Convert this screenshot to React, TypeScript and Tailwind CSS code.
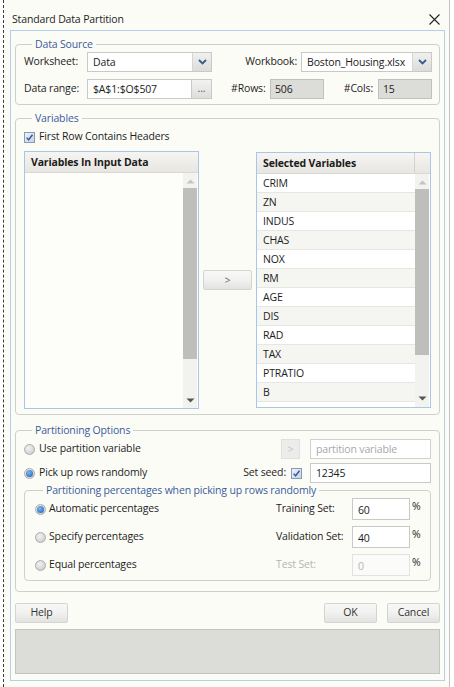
import React from 'react';

const VARS = ['CRIM', 'ZN', 'INDUS', 'CHAS', 'NOX', 'RM', 'AGE', 'DIS', 'RAD', 'TAX', 'PTRATIO', 'B', 'LSTAT'];

function Group({ title, className = '', children }: { title: string; className?: string; children: React.ReactNode }) {
  return (
    <fieldset className={`border border-[#cfcfcb] rounded-[4px] ${className}`}>
      <legend className="ml-[8px] px-[3px] text-[#3b5b9b] leading-[14px]">{title}</legend>
      {children}
    </fieldset>
  );
}

function Btn({ children, className = '' }: { children: React.ReactNode; className?: string }) {
  return (
    <div className={`h-[20px] flex items-center justify-center border border-[#d4d4d2] rounded-[2px] bg-gradient-to-b from-[#f8f8f7] via-[#f1f1ef] to-[#e2e2e0] text-[#333] ${className}`}>
      {children}
    </div>
  );
}

function Radio({ on = false }: { on?: boolean }) {
  return (
    <span className="w-[11px] h-[11px] rounded-full border border-[#acacac] bg-[radial-gradient(circle_at_40%_35%,#f2f2f2,#c6c6c6)] flex items-center justify-center shrink-0">
      {on && <span className="w-[7px] h-[7px] rounded-full bg-[radial-gradient(circle_at_40%_35%,#7cb8f2,#1b5bb6)]" />}
    </span>
  );
}

function Check() {
  return (
    <span className="w-[11px] h-[11px] border border-[#8a9ab2] bg-gradient-to-br from-[#eef2f8] to-[#c8d2e2] flex items-center justify-center shrink-0">
      <svg width="9" height="9" viewBox="0 0 9 9">
        <path d="M1.6 4.6 L3.6 6.8 L7.5 1.8" fill="none" stroke="#3158a8" strokeWidth="1.4" />
      </svg>
    </span>
  );
}

function Combo({ value, className = '' }: { value: string; className?: string }) {
  return (
    <div className={`h-[20px] flex border border-[#c9c9c7] bg-white ${className}`}>
      <span className="flex-1 pl-[5px] leading-[18px] whitespace-nowrap overflow-hidden">{value}</span>
      <span className="w-[19px] flex items-center justify-center bg-gradient-to-b from-[#f0f0ee] to-[#dcdcda] border-l border-[#d6d6d4]">
        <svg width="9" height="6" viewBox="0 0 9 6">
          <path d="M1 1 L4.5 4.5 L8 1" fill="none" stroke="#3a5a8c" strokeWidth="1.8" />
        </svg>
      </span>
    </div>
  );
}

function Tri({ up = false, color }: { up?: boolean; color: string }) {
  return (
    <svg width="9" height="5" viewBox="0 0 9 5">
      <path d={up ? 'M0.5 4.5 L4.5 0.5 L8.5 4.5 Z' : 'M0.5 0.5 L4.5 4.5 L8.5 0.5 Z'} fill={color} />
    </svg>
  );
}

function ScrollBar({ thumb, downPad }: { thumb: number; downPad: string }) {
  return (
    <div className="w-[14px] flex flex-col bg-[#f2f2ef]">
      <div className="h-[15px] flex items-center justify-center pt-[2px]">
        <Tri up color="#c4c4c2" />
      </div>
      <div className="bg-[#bebeba]" style={{ height: thumb }} />
      <div className={`flex-1 flex items-end justify-center ${downPad}`}>
        <Tri color="#555" />
      </div>
    </div>
  );
}

export default function App() {
  return (
    <div className="w-[454px] h-[687px] flex bg-white font-['Open_Sans',sans-serif] text-[10.5px] tracking-[-0.15px] text-[#1c1c1c]">
      <div className="ml-[3px] w-0 border-l border-dashed border-[#3a3a3a]" />
      <div className="w-[445px] h-full bg-[#fcfcf7]">
        {/* title bar */}
        <div className="h-[30px] flex items-start justify-between pt-[11px] pl-[8px] pr-[9px]">
          <span className="leading-[17px]">Standard Data Partition</span>
          <svg width="11" height="11" viewBox="0 0 11 11" className="mt-[3px]">
            <path d="M0.5 0.5 L10.5 10.5 M10.5 0.5 L0.5 10.5" stroke="#222" strokeWidth="1.1" />
          </svg>
        </div>

        <div className="ml-[6px] w-[435px] h-[651px] border border-[#b8cde8] px-[4px] pt-[6px] flex flex-col">
          {/* data source */}
          <Group title="Data Source" className="pl-[8px] pr-[7px] pb-[5px]">
            <div className="flex flex-col gap-[7px] mt-[1px]">
              <div className="flex items-center h-[20px]">
                <span className="w-[63px]">Worksheet:</span>
                <Combo value="Data" className="w-[125px]" />
                <span className="flex-1 text-right pr-[4px]">Workbook:</span>
                <Combo value="Boston_Housing.xlsx" className="w-[131px]" />
              </div>
              <div className="flex items-center h-[20px]">
                <span className="w-[63px]">Data range:</span>
                <div className="w-[105px] h-[20px] border border-[#c9c9c7] bg-white pl-[5px] leading-[18px]">$A$1:$O$507</div>
                <div className="w-[20px] h-[20px] border border-l-0 border-[#c9c9c7] bg-gradient-to-b from-[#f2f2f0] to-[#dededc] text-center leading-[16px] text-[#555]">...</div>
                <span className="ml-[19px] w-[39px]">#Rows:</span>
                <div className="w-[54px] h-[20px] border border-[#c0c0be] bg-[#dcdcd9] pl-[4px] leading-[18px]">506</div>
                <span className="flex-1 text-right pr-[5px]">#Cols:</span>
                <div className="w-[54px] h-[20px] border border-[#c0c0be] bg-[#dcdcd9] pl-[4px] leading-[18px]">15</div>
              </div>
            </div>
          </Group>

          {/* variables */}
          <Group title="Variables" className="mt-[6px] pl-[8px] pr-[8px] pb-[5px]">
            <div className="mt-[4px] h-[16px] flex items-center gap-[4px]">
              <Check />
              <span>First Row Contains Headers</span>
            </div>
            <div className="mt-[6px] flex items-center">
              <div className="w-[175px] h-[258px] border border-[#a9c5e8] bg-[#fdfdfa] flex flex-col">
                <div className="h-[21px] shrink-0 bg-gradient-to-b from-[#f6f5f2] to-[#e8e6e1] border-b border-[#d8d8d4] pl-[6px] font-bold leading-[20px]">
                  Variables In Input Data
                </div>
                <div className="flex-1 flex justify-end pr-[1px]">
                  <ScrollBar thumb={171} downPad="pb-[5px]" />
                </div>
              </div>
              <Btn className="w-[49px] mx-[4px] text-[10px] text-[#666]">&gt;</Btn>
              <div className="w-[175px] h-[256px] border border-[#a9c5e8] bg-white flex flex-col">
                <div className="h-[21px] shrink-0 flex bg-gradient-to-b from-[#f6f5f2] to-[#e8e6e1] border-b border-[#d8d8d4]">
                  <span className="flex-1 pl-[6px] font-bold leading-[20px]">Selected Variables</span>
                  <span className="w-[16px] border-l border-[#d2d2ce]" />
                </div>
                <div className="flex-1 flex min-h-0">
                  <div className="flex-1 overflow-hidden">
                    {VARS.map((v, i) => (
                      <div
                        key={v}
                        className={`h-[19px] pl-[6px] leading-[18px] border-b border-[#e6e6e2] ${i % 2 ? 'bg-[#f5f5f2]' : 'bg-white'}`}
                      >
                        {v}
                      </div>
                    ))}
                  </div>
                  <div className="pr-[1px] flex">
                    <ScrollBar thumb={166} downPad="pb-[6px]" />
                  </div>
                </div>
              </div>
            </div>
          </Group>

          {/* partitioning */}
          <Group title="Partitioning Options" className="mt-[8px] pl-[8px] pr-[8px] pb-[10px]">
            <div className="mt-[2px] flex flex-col gap-[4px]">
              <div className="h-[20px] flex items-center">
                <Radio />
                <span className="ml-[4px] flex-1">Use partition variable</span>
                <div className="w-[19px] h-[20px] mr-[10px] border border-[#e0e0de] bg-[#ececea] text-center leading-[18px] text-[#c2c2c0] text-[10px]">&gt;</div>
                <div className="w-[121px] h-[20px] border border-[#d0d0ce] bg-white pl-[5px] leading-[18px] text-[#a8a8a8]">partition variable</div>
              </div>
              <div className="h-[20px] flex items-center">
                <Radio on />
                <span className="ml-[4px] flex-1">Pick up rows randomly</span>
                <span className="mr-[5px]">Set seed:</span>
                <Check />
                <div className="ml-[8px] w-[121px] h-[20px] border border-[#c9c9c7] bg-white pl-[5px] leading-[18px]">12345</div>
              </div>
            </div>

            <Group title="Partitioning percentages when picking up rows randomly" className="pl-[10px] pb-[4px]">
              <div className="mt-[1px] flex flex-col gap-[6px]">
                {[
                  { label: 'Automatic percentages', on: true, name: 'Training Set:', val: '60', off: false },
                  { label: 'Specify percentages', on: false, name: 'Validation Set:', val: '40', off: false },
                  { label: 'Equal percentages', on: false, name: 'Test Set:', val: '0', off: true },
                ].map((r) => (
                  <div key={r.label} className="h-[22px] flex items-center">
                    <Radio on={r.on} />
                    <span className="ml-[3px] flex-1">{r.label}</span>
                    <span className={`w-[76px] ${r.off ? 'text-[#b4b4b2]' : ''}`}>{r.name}</span>
                    <div
                      className={`w-[58px] h-[22px] border pl-[5px] pt-[2px] leading-[18px] ${
                        r.off ? 'border-[#e2e2e0] bg-[#fbfbf9] text-[#b4b4b2]' : 'border-[#c9c9c7] bg-white'
                      }`}
                    >
                      {r.val}
                    </div>
                    <span className="w-[20px] pl-[2px] self-start leading-[16px]">%</span>
                  </div>
                ))}
              </div>
            </Group>
          </Group>

          {/* buttons */}
          <div className="mt-[11px] flex items-center">
            <Btn className="w-[53px]">Help</Btn>
            <div className="flex-1" />
            <Btn className="w-[53px]">OK</Btn>
            <Btn className="w-[53px] ml-[10px]">Cancel</Btn>
          </div>

          <div className="mt-[6px] h-[45px] border border-[#c4c4c0] bg-[#dcdcd8]" />
        </div>
      </div>
      <div className="w-[1px] h-full bg-[#c4c4c4]" />
    </div>
  );
}
